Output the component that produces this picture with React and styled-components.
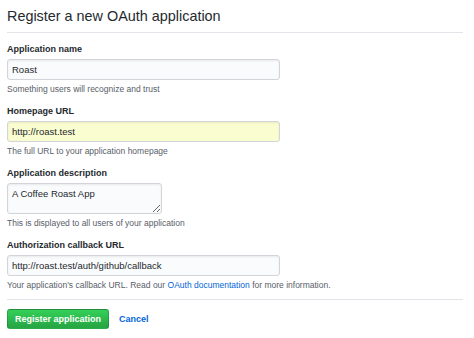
import styled, { createGlobalStyle } from 'styled-components';

const GlobalStyle = createGlobalStyle`
   html, body {
      margin: 0;
      padding: 0;
      background: #fff;
   }
   body {
      font-family: "Liberation Sans", Arial, Helvetica, sans-serif;
      color: #24292e;
   }
`;

const Page = styled.div`
   width: 456px;
   margin-left: 7px;
`;

const Title = styled.h1`
   margin: 6px 0 0;
   padding-bottom: 6px;
   font-size: 14.4px;
   font-weight: 400;
   line-height: 20px;
   color: #24292e;
   border-bottom: 1px solid #e1e4e8;
`;

const Form = styled.form`
   display: flex;
   flex-direction: column;
   gap: 9px;
   margin-top: 9px;
`;

const Field = styled.div`
   display: flex;
   flex-direction: column;
   align-items: flex-start;
`;

const Label = styled.label`
   font-size: 9px;
   font-weight: 700;
   line-height: 14px;
   margin-bottom: 3px;
`;

const TextInput = styled.input`
   box-sizing: border-box;
   width: 273px;
   height: 21px;
   padding: 0 4px;
   font-family: inherit;
   font-size: 9.5px;
   color: #24292e;
   background: ${p => (p.$autofill ? '#fafdcf' : '#fafbfc')};
   border: 1px solid #d1d5da;
   border-radius: 3px;
   box-shadow: inset 0 1px 2px rgba(27, 31, 35, 0.075);
   outline: none;
`;

const TextArea = styled.textarea`
   box-sizing: border-box;
   width: 155px;
   height: 31px;
   padding: 4px;
   font-family: inherit;
   font-size: 9.5px;
   line-height: 12px;
   color: #24292e;
   background: #fafbfc;
   border: 1px solid #d1d5da;
   border-radius: 3px;
   box-shadow: inset 0 1px 2px rgba(27, 31, 35, 0.075);
   outline: none;
   resize: both;
`;

const Note = styled.p`
   margin: 3px 0 0;
   font-size: 8.5px;
   line-height: 12px;
   color: #586069;
`;

const Link = styled.a`
   color: #0366d6;
   text-decoration: none;
`;

const Actions = styled.div`
   display: flex;
   align-items: center;
   gap: 10px;
   margin-top: -1px;
   padding-top: 9px;
   border-top: 1px solid #e1e4e8;
`;

const Button = styled.button`
   box-sizing: border-box;
   height: 20px;
   padding: 0 7px;
   font-family: inherit;
   font-size: 9px;
   font-weight: 700;
   color: #fff;
   background-image: linear-gradient(-180deg, #34d058 0%, #28a745 90%);
   border: 1px solid rgba(27, 31, 35, 0.2);
   border-radius: 3px;
   cursor: pointer;
`;

const CancelLink = styled(Link)`
   font-size: 9px;
   font-weight: 700;
`;

export default function App() {
   return (
      <Page>
         <GlobalStyle />
         <Title>Register a new OAuth application</Title>
         <Form onSubmit={e => e.preventDefault()}>
            <Field>
               <Label>Application name</Label>
               <TextInput defaultValue="Roast" />
               <Note>Something users will recognize and trust</Note>
            </Field>
            <Field>
               <Label>Homepage URL</Label>
               <TextInput $autofill defaultValue="http://roast.test" />
               <Note>The full URL to your application homepage</Note>
            </Field>
            <Field>
               <Label>Application description</Label>
               <TextArea defaultValue="A Coffee Roast App" />
               <Note>This is displayed to all users of your application</Note>
            </Field>
            <Field>
               <Label>Authorization callback URL</Label>
               <TextInput defaultValue="http://roast.test/auth/github/callback" />
               <Note>
                  Your application's callback URL. Read our <Link href="#">OAuth documentation</Link> for more information.
               </Note>
            </Field>
            <Actions>
               <Button type="submit">Register application</Button>
               <CancelLink href="#">Cancel</CancelLink>
            </Actions>
         </Form>
      </Page>
   );
}
